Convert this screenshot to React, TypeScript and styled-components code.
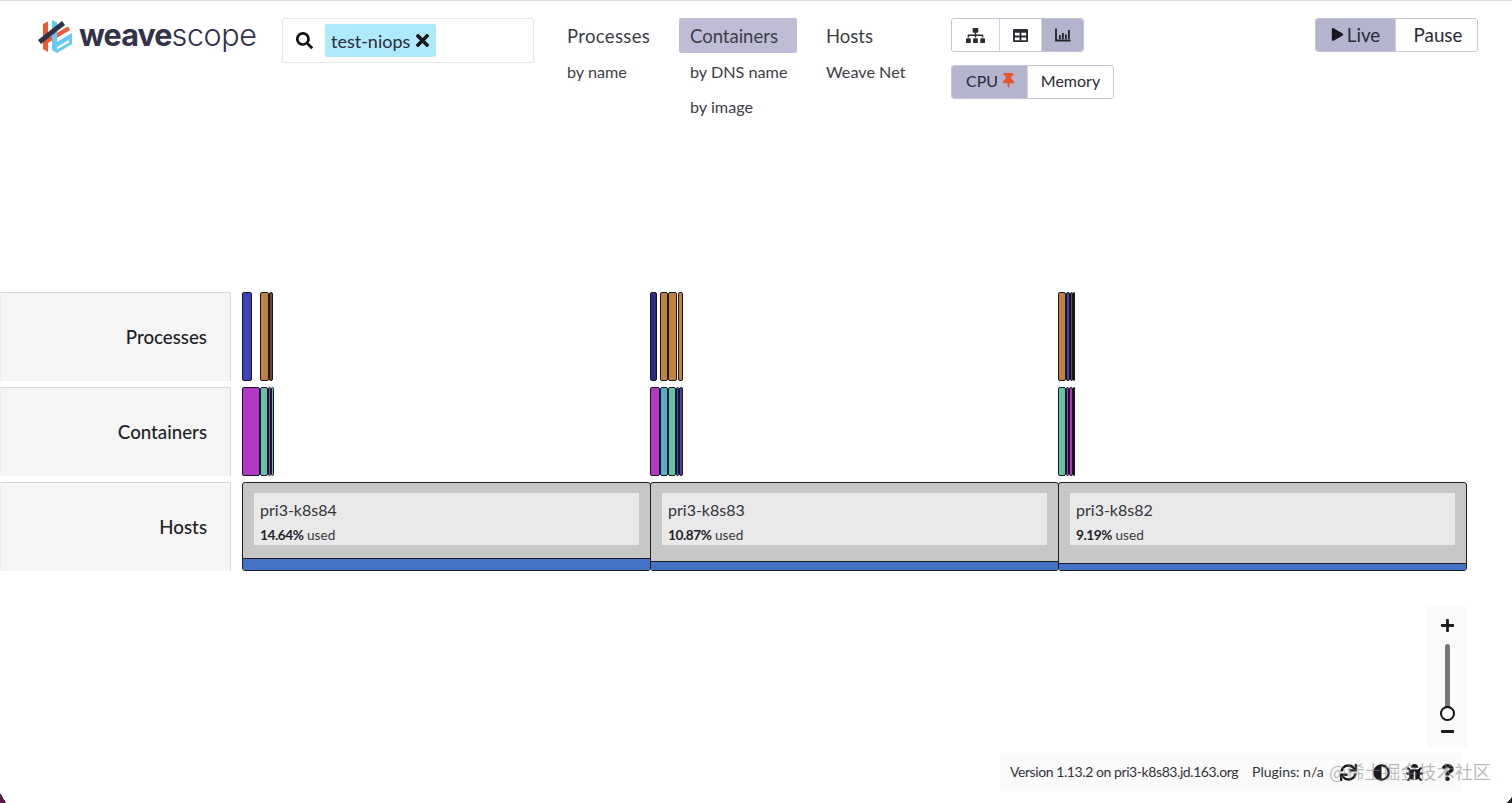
import React from 'react';
import styled, { createGlobalStyle } from 'styled-components';
import { FaSearch, FaTimes, FaSitemap, FaTable, FaThumbtack, FaPlay, FaSync, FaAdjust, FaBug, FaQuestion, FaPlus, FaMinus } from 'react-icons/fa';

const Global = createGlobalStyle`
  html, body { margin: 0; padding: 0; background: #fff; }
  * { box-sizing: border-box; }
`;

const Page = styled.div`
  position: relative;
  width: 1512px;
  height: 803px;
  overflow: hidden;
  background: #fff;
  border-top: 1px solid #dcdcdc;
  font-family: "Lato", "Liberation Sans", sans-serif;
  color: #33333f;
  &::before {
    content: "";
    position: absolute;
    left: 0;
    bottom: 0;
    width: 6px;
    height: 10px;
    background: linear-gradient(to top right, #5c1c48 50%, transparent 52%);
  }
  &::after {
    content: "";
    position: absolute;
    right: 0;
    bottom: 0;
    width: 5px;
    height: 6px;
    background: linear-gradient(to top left, #22222a 50%, transparent 52%);
  }
`;

const Header = styled.header`
  display: flex;
  align-items: flex-start;
  height: 117px;
  padding: 17px 34px 0 38px;
`;

const Logo = styled.div`
  display: flex;
  align-items: center;
  width: 219px;
  height: 36px;
  margin-right: 25px;
`;

const LogoText = styled.span`
  font-family: "Inter", sans-serif;
  font-size: 30.5px;
  letter-spacing: -0.4px;
  color: #32324b;
  font-weight: 300;
  margin: 0 0 3px 7px;
  line-height: 36px;
  white-space: nowrap;
`;

const LogoBold = styled.b`
  font-weight: 700;
  letter-spacing: -0.9px;
`;

const Search = styled.div`
  display: flex;
  align-items: center;
  width: 252px;
  height: 45px;
  padding-left: 13px;
  border: 1px solid #e6e6ea;
  border-radius: 2px;
  margin-right: 22px;
  font-size: 18px;
`;

const Chip = styled.div`
  display: flex;
  align-items: center;
  gap: 3px;
  height: 33px;
  margin-left: 12px;
  padding: 0 4px 0 6px;
  background: #aeeafc;
  border-radius: 2px;
  font-size: 18px;
  color: #2b2b3a;
`;

const Topologies = styled.nav`
  display: flex;
  gap: 18px;
  margin-right: 43px;
`;

const TopologyColumn = styled.div<{ $width: number }>`
  display: flex;
  flex-direction: column;
  width: ${p => p.$width}px;
`;

const TopologyButton = styled.div<{ $active?: boolean; $spacing?: number }>`
  height: 35px;
  line-height: 37px;
  padding-left: 11px;
  font-size: 18.5px;
  letter-spacing: ${p => p.$spacing ?? 0}px;
  border-radius: 2px;
  color: #3d3d47;
  background: ${p => (p.$active ? '#bfbdd6' : 'transparent')};
`;

const SubTopology = styled.div`
  height: 35px;
  line-height: 37px;
  padding-left: 11px;
  font-size: 16.2px;
  color: #3d3d47;
  &:first-of-type { margin-top: 1px; }
`;

const Controls = styled.div`
  display: flex;
  flex-direction: column;
  align-items: flex-start;
  gap: 13px;
`;

const ButtonGroup = styled.div`
  display: flex;
  height: 34px;
  border: 1px solid #c4c4d6;
  border-radius: 3px;
  overflow: hidden;
  background: #fff;
`;

const GroupButton = styled.div<{ $width: number; $active?: boolean }>`
  display: flex;
  align-items: center;
  justify-content: center;
  gap: 3px;
  width: ${p => p.$width}px;
  font-size: 16px;
  color: #2b2b35;
  background: ${p => (p.$active ? '#b4b4cf' : '#fff')};
  & + & { border-left: 1px solid ${p => (p.$active ? '#b4b4cf' : '#d4d4dc')}; }
`;

const MetricButton = styled(GroupButton)`
  padding: 0 0 3px ${p => (p.$active ? 3 : 0)}px;
`;

const LiveGroup = styled.div`
  margin-left: auto;
`;

const LiveButton = styled(GroupButton)`
  font-size: 18.8px;
  padding: 0 0 2px ${p => (p.$active ? 0 : 3)}px;
`;

const Pin = styled(FaThumbtack)`
  color: #e8552d;
  font-size: 15px;
`;

const Resources = styled.main`
  display: flex;
  flex-direction: column;
  gap: 6px;
  margin-top: 174px;
`;

const Row = styled.section`
  display: flex;
  height: 89px;
`;

const RowLabel = styled.div`
  display: flex;
  align-items: center;
  justify-content: flex-end;
  width: 231px;
  margin-right: 11px;
  padding: 0 23px 1px 0;
  background: #f5f5f5;
  border: 1px solid #d8d8d8;
  border-bottom: none;
  border-left-color: #eee;
  border-radius: 0 2px 0 0;
  font-size: 18.7px;
  font-weight: 500;
  color: #1f1f26;
`;

const Column = styled.div`
  display: flex;
  width: 408px;
  flex: none;
`;

const Bar = styled.div<{ $w: number; $color: string; $gap?: number }>`
  width: ${p => p.$w}px;
  margin-left: ${p => p.$gap ?? 0}px;
  background: ${p => p.$color};
  border: 1px solid #17171f;
  border-radius: 2px;
`;

const Host = styled.div`
  display: flex;
  flex-direction: column;
  width: 409px;
  flex: none;
  margin-right: -1px;
  background: #c7c7c7;
  border: 1px solid #1c1c22;
  border-radius: 3px;
  overflow: hidden;
`;

const HostCard = styled.div`
  height: 52px;
  margin: 10px 11px 0;
  padding: 6px 6px 0;
  background: #e9e9e9;
`;

const HostName = styled.div`
  font-size: 16px;
  line-height: 21px;
  color: #33333a;
`;

const HostUsage = styled.div`
  margin-top: 6px;
  font-size: 13.6px;
  line-height: 18px;
  color: #3a3a42;
`;

const HostPercent = styled.b`
  letter-spacing: -0.4px;
  color: #23232a;
`;

const HostFill = styled.div`
  margin-top: auto;
  background: #4472c4;
  border-top: 1px solid #1c1c22;
`;

const ZoomPanel = styled.div`
  position: absolute;
  left: 1427px;
  top: 605px;
  display: flex;
  flex-direction: column;
  align-items: center;
  width: 40px;
  height: 141px;
  padding-top: 12px;
  background: #fafafa;
  color: #1d1d22;
  font-size: 15px;
`;

const ZoomTrack = styled.div`
  position: relative;
  width: 5px;
  height: 70px;
  margin: 11px 0 0;
  background: #777;
  border-radius: 3px 3px 0 0;
`;

const ZoomHandle = styled.div`
  position: absolute;
  left: -5px;
  bottom: -7px;
  width: 15px;
  height: 15px;
  border: 2px solid #111;
  border-radius: 50%;
  background: #fff;
`;

const ZoomMinus = styled.div`
  display: flex;
  margin-top: 10px;
  font-size: 15px;
`;

const Footer = styled.footer`
  position: absolute;
  left: 1000px;
  top: 752px;
  display: flex;
  align-items: center;
  width: 462px;
  height: 38px;
  padding: 0 0 2px 10px;
  background: #fafafa;
  font-size: 14px;
  color: #33333b;
  white-space: nowrap;
`;

const FooterText = styled.span<{ $gap?: number; $spacing?: number }>`
  margin-left: ${p => p.$gap ?? 0}px;
  letter-spacing: ${p => p.$spacing ?? 0}px;
`;

const FooterIcons = styled.div`
  position: absolute;
  left: 340px;
  top: 11px;
  display: flex;
  gap: 16px;
  font-size: 17px;
  color: #18181e;
`;

const Watermark = styled.div`
  position: absolute;
  left: 1329px;
  top: 759px;
  font-family: "Noto Sans CJK SC", "Noto Sans", sans-serif;
  font-size: 18px;
  line-height: 22px;
  letter-spacing: 0.1px;
  color: rgba(130, 130, 130, 0.55);
  white-space: nowrap;
`;

const LogoMark = () => (
  <svg width="34" height="36" viewBox="0 0 34 36" aria-hidden="true" style={{ flex: 'none' }}>
    <path d="M5 6 L10 3.5 V34 L5 31 Z" fill="#ee5a34" />
    <path d="M10 20 L30 8.5 L32 12 L10 25 Z" fill="#ee5a34" />
    <path d="M14 2 L19 4.5 V35 L14 32 Z" fill="#66c8f8" />
    <path d="M19 24 L34 15 V20 L19 29 Z" fill="#66c8f8" />
    <path d="M19 35 L34 26 V20 L31 22 V24.5 L19 31.5 Z" fill="#66c8f8" />
    <path d="M0 22 L24 3 L27 7 L3 26 Z" fill="#32324b" />
  </svg>
);

const ChartIcon = () => (
  <svg width="16" height="14" viewBox="0 0 16 14" aria-hidden="true">
    <path d="M1 0.5 V12.5 H15.5" fill="none" stroke="#23232b" strokeWidth="1.8" />
    <path d="M4 7 h1.8 v4 H4 Z M7 5 h1.8 v6 H7 Z M10 6.5 h1.8 v4.5 H10 Z M13 2 h1.8 v9 H13 Z" fill="#23232b" />
  </svg>
);

type Seg = { w: number; c: string; g?: number };
const navy = '#2b2b88', blue = '#3f3fc2', brown = '#c0823f', dark = '#6d4a24', purple = '#b038c2', green = '#62c4a4', teal = '#4fb2c6', sky = '#6ab8d8', violet = '#6a3ac8';

const processes: Seg[][] = [
  [{ w: 10, c: blue }, { w: 9, c: brown, g: 8 }, { w: 4, c: dark }],
  [{ w: 7, c: navy }, { w: 8, c: brown, g: 3 }, { w: 9, c: brown }, { w: 5, c: brown, g: 1 }],
  [{ w: 8, c: brown }, { w: 4, c: blue }, { w: 3, c: dark }, { w: 2, c: dark }],
];
const containers: Seg[][] = [
  [{ w: 18, c: purple }, { w: 8, c: green }, { w: 3, c: purple }, { w: 3, c: sky }],
  [{ w: 10, c: purple }, { w: 8, c: teal }, { w: 8, c: green }, { w: 3, c: violet }, { w: 4, c: blue }],
  [{ w: 8, c: green }, { w: 3, c: purple }, { w: 4, c: purple }, { w: 2, c: navy }],
];
const hosts = [
  { name: 'pri3-k8s84', pct: '14.64%', fill: 12 },
  { name: 'pri3-k8s83', pct: '10.87%', fill: 9 },
  { name: 'pri3-k8s82', pct: '9.19%', fill: 7 },
];

const BarRow = ({ label, data }: { label: string; data: Seg[][] }) => (
  <Row>
    <RowLabel>{label}</RowLabel>
    {data.map((col, i) => (
      <Column key={i}>
        {col.map((s, j) => <Bar key={j} $w={s.w} $color={s.c} $gap={s.g} />)}
      </Column>
    ))}
  </Row>
);

export default function App() {
  return (
    <Page>
      <Global />
      <Header>
        <Logo>
          <LogoMark />
          <LogoText><LogoBold>weave</LogoBold>scope</LogoText>
        </Logo>
        <Search>
          <FaSearch size={17} color="#111" />
          <Chip>test-niops <FaTimes size={19} color="#16161c" /></Chip>
        </Search>
        <Topologies>
          <TopologyColumn $width={105}>
            <TopologyButton $spacing={0.35}>Processes</TopologyButton>
            <SubTopology>by name</SubTopology>
          </TopologyColumn>
          <TopologyColumn $width={118}>
            <TopologyButton $active>Containers</TopologyButton>
            <SubTopology>by DNS name</SubTopology>
            <SubTopology>by image</SubTopology>
          </TopologyColumn>
          <TopologyColumn $width={93}>
            <TopologyButton>Hosts</TopologyButton>
            <SubTopology>Weave Net</SubTopology>
          </TopologyColumn>
        </Topologies>
        <Controls>
          <ButtonGroup>
            <GroupButton $width={47}><FaSitemap size={19} /></GroupButton>
            <GroupButton $width={42}><FaTable size={15} /></GroupButton>
            <GroupButton $width={42} $active><ChartIcon /></GroupButton>
          </ButtonGroup>
          <ButtonGroup>
            <MetricButton $width={75} $active>CPU <Pin /></MetricButton>
            <MetricButton $width={86}>Memory</MetricButton>
          </ButtonGroup>
        </Controls>
        <LiveGroup>
          <ButtonGroup>
            <LiveButton $width={79} $active><FaPlay size={13} color="#16161c" /> Live</LiveButton>
            <LiveButton $width={82}>Pause</LiveButton>
          </ButtonGroup>
        </LiveGroup>
      </Header>
      <Resources>
        <BarRow label="Processes" data={processes} />
        <BarRow label="Containers" data={containers} />
        <Row>
          <RowLabel>Hosts</RowLabel>
          {hosts.map(h => (
            <Host key={h.name}>
              <HostCard>
                <HostName>{h.name}</HostName>
                <HostUsage><HostPercent>{h.pct}</HostPercent> used</HostUsage>
              </HostCard>
              <HostFill style={{ height: h.fill }} />
            </Host>
          ))}
        </Row>
      </Resources>
      <ZoomPanel>
        <FaPlus />
        <ZoomTrack><ZoomHandle /></ZoomTrack>
        <ZoomMinus><FaMinus /></ZoomMinus>
      </ZoomPanel>
      <Footer>
        <FooterText $spacing={-0.42}>Version 1.13.2 on pri3-k8s83.jd.163.org</FooterText>
        <FooterText $gap={14}>Plugins: n/a</FooterText>
        <FooterIcons>
          <FaSync /><FaAdjust /><FaBug /><FaQuestion />
        </FooterIcons>
      </Footer>
      <Watermark>@稀土掘金技术社区</Watermark>
    </Page>
  );
}
